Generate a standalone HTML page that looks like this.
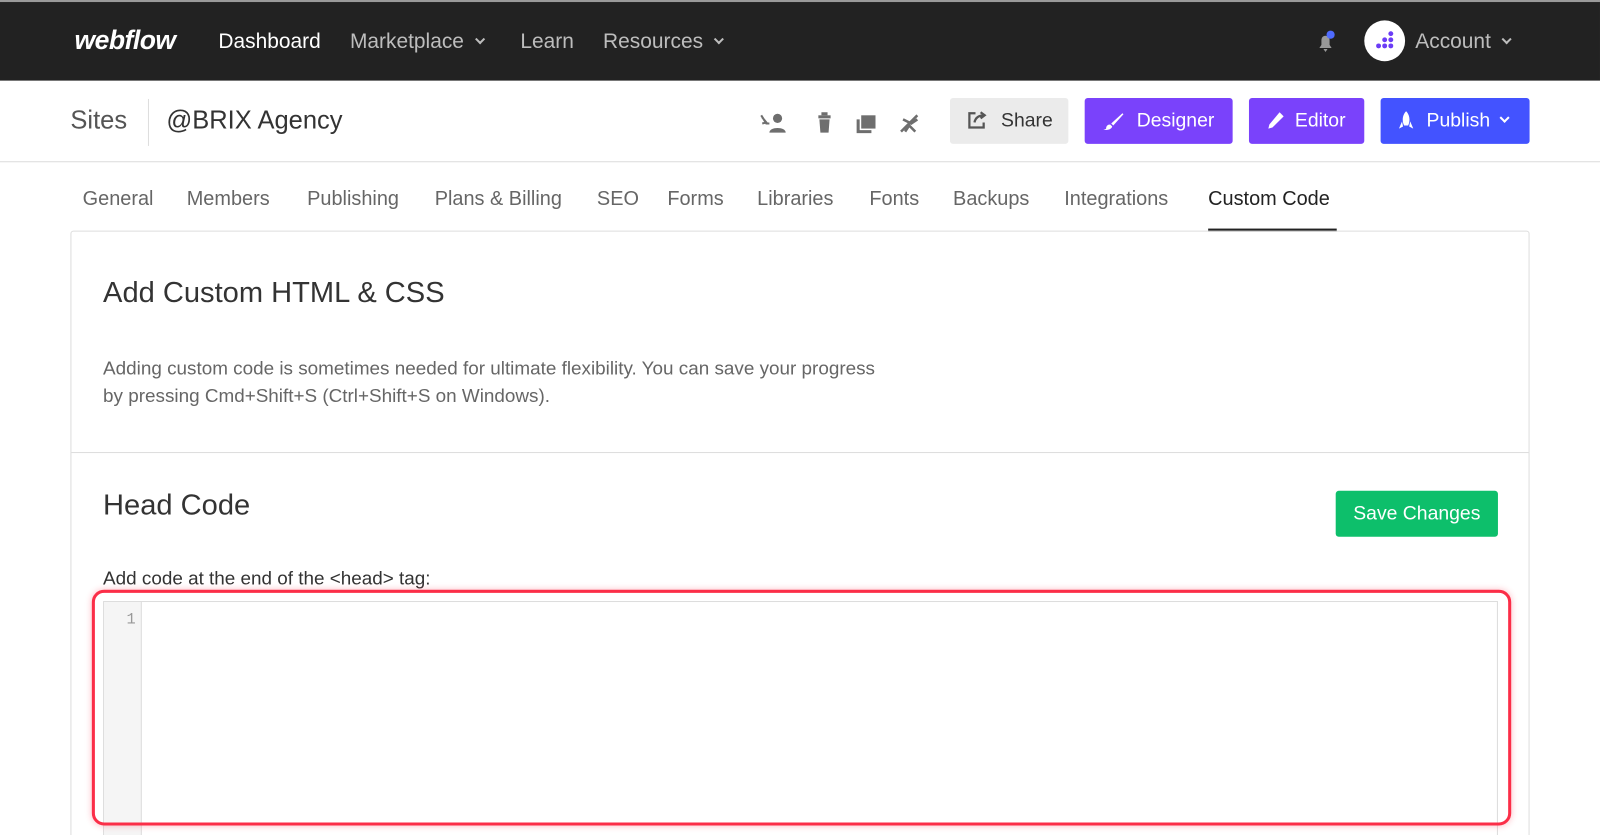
<!DOCTYPE html>
<html><head><meta charset="utf-8"><style>
*{box-sizing:border-box;margin:0;padding:0}
html,body{width:1600px;height:835px;overflow:hidden;background:#fff}
body{font-family:"Liberation Sans",sans-serif;color:#333;position:relative}
#w{position:absolute;left:0;top:0;width:1568px;height:820px;transform:scale(1.0204);transform-origin:0 0}
.top{position:absolute;left:0;top:0;width:1568px;height:79px;background:#222;border-top:2px solid #9a9a9a}
.top span{position:absolute;top:27px;font-size:20.5px;color:#bdbdbd}
.chev{display:inline-block;width:7px;height:7px;border-right:2px solid currentColor;border-bottom:2px solid currentColor;transform:rotate(45deg);margin-left:12px;position:relative;top:-5px}
.sub{position:absolute;top:79px;left:0;width:1568px;height:80px;border-bottom:1px solid #ddd}
.btn{position:absolute;top:17px;height:45px;border-radius:3px;font-size:19px;color:#fff;line-height:45px}
.tabs span{position:absolute;top:184px;font-size:19.5px;color:#666}
.card{position:absolute;left:69px;top:226px;width:1430px;height:620px;border:1px solid #ddd;border-radius:3px}
</style></head><body><div id="w">
<div class="top">
<span style="left:73px;top:22px;font-size:26px;font-weight:bold;font-style:italic;color:#fff;letter-spacing:-0.5px">webflow</span>
<span style="left:214px;color:#fff">Dashboard</span>
<span style="left:343px">Marketplace<i class="chev"></i></span>
<span style="left:510px">Learn</span>
<span style="left:591px">Resources<i class="chev"></i></span>
<svg style="position:absolute;left:1288px;top:27px" width="24" height="24" viewBox="0 0 24 24"><path d="M5 18h12l-2-3V10a4 4 0 0 0-8 0v5z M9 19h4l-2 3z" fill="#999"/><circle cx="16" cy="5" r="4" fill="#4f6bff"/></svg>
<div style="position:absolute;left:1337px;top:18px;width:40px;height:40px;border-radius:50%;background:#fff"><svg width="40" height="40"><g fill="#6b3cf6"><circle cx="26" cy="13" r="2.4"/><circle cx="20" cy="19" r="2.4"/><circle cx="26" cy="19" r="2.4"/><circle cx="14" cy="25" r="2.4"/><circle cx="20" cy="25" r="2.4"/><circle cx="26" cy="25" r="2.4"/></g></svg></div>
<span style="left:1387px">Account<i class="chev"></i></span>
</div>
<div class="sub">
<span style="position:absolute;left:69px;top:25px;font-size:25px;color:#555">Sites</span>
<div style="position:absolute;left:145px;top:18px;width:1px;height:46px;background:#ddd"></div>
<span style="position:absolute;left:163px;top:25px;font-size:25px;color:#333">@BRIX Agency</span>
<svg style="position:absolute;left:745px;top:30px" width="165" height="24" viewBox="0 0 165 24" fill="#6e6e6e"><path d="M2 6l4 5-4 1M1 4l5 8h3" stroke="#6e6e6e" stroke-width="2" fill="none"/><circle cx="17" cy="7" r="4.5"/><path d="M9 21c0-6 16-6 16 0z"/><rect x="57" y="4" width="12" height="3"/><rect x="60" y="1" width="6" height="3"/><path d="M58 8h10l-1 13h-8z"/><rect x="99" y="4" width="14" height="13"/><path d="M96 8v12h13" stroke="#6e6e6e" stroke-width="3" fill="none"/><path d="M138 20l16-16M140 8l8 4 6-4M142 20l4-6 6 6" stroke="#6e6e6e" stroke-width="2.5" fill="none"/></svg>
<div class="btn" style="left:931px;width:116px;background:#ebebeb;color:#333"><svg style="position:absolute;left:17px;top:13px" width="20" height="18" viewBox="0 0 20 18" fill="none" stroke="#555" stroke-width="2.2"><path d="M8 2H2v14h14v-5M7 11c1-5 5-7 10-7M13 1l4 3-4 3"/></svg><span style="position:absolute;left:50px">Share</span></div>
<div class="btn" style="left:1063px;width:145px;background:#7a42fb"><svg style="position:absolute;left:17px;top:14px" width="22" height="18" viewBox="0 0 22 18" fill="#fff"><path d="M20 1L9 11l2 2L21 2zM8 12c-3 0-4 2-4 4-1 1-3 1-3 1 4 1 8 0 9-3z"/></svg><span style="position:absolute;left:51px">Designer</span></div>
<div class="btn" style="left:1224px;width:113px;background:#7a42fb"><svg style="position:absolute;left:17px;top:13px" width="18" height="18" viewBox="0 0 18 18" fill="#fff"><path d="M13 1l4 4L6 16l-4 1 1-4z"/></svg><span style="position:absolute;left:45px">Editor</span></div>
<div class="btn" style="left:1353px;width:146px;background:#4353ff"><svg style="position:absolute;left:16px;top:12px" width="18" height="20" viewBox="0 0 18 20" fill="#fff"><path d="M9 1c4 4 4 10 2 14H7C5 11 5 5 9 1zM5 11l-3 7 4-2zM13 11l3 7-4-2z"/></svg><span style="position:absolute;left:45px">Publish<i class="chev" style="margin-left:11px"></i></span></div>
</div>
<div class="tabs">
<span style="left:81px">General</span><span style="left:183px">Members</span><span style="left:301px">Publishing</span><span style="left:426px">Plans &amp; Billing</span><span style="left:585px">SEO</span><span style="left:654px">Forms</span><span style="left:742px">Libraries</span><span style="left:852px">Fonts</span><span style="left:934px">Backups</span><span style="left:1043px">Integrations</span><span style="left:1184px;color:#222">Custom Code</span>
<div style="position:absolute;left:1184px;top:224px;width:126px;height:3px;background:#222"></div>
</div>
<div class="card">
<div style="position:absolute;left:31px;top:44px;font-size:28.5px;color:#333">Add Custom HTML &amp; CSS</div>
<div style="position:absolute;left:31px;top:120px;font-size:18.5px;line-height:27px;color:#666;width:760px">Adding custom code is sometimes needed for ultimate flexibility. You can save your progress by pressing Cmd+Shift+S (Ctrl+Shift+S on Windows).</div>
<div style="position:absolute;left:0;top:216px;width:1428px;height:1px;background:#ddd"></div>
<div style="position:absolute;left:31px;top:252px;font-size:28.5px;color:#333">Head Code</div>
<div style="position:absolute;left:1239px;top:254px;width:159px;height:45px;background:#0dbf6b;border-radius:3px;color:#fff;font-size:19px;line-height:45px;text-align:center">Save Changes</div>
<div style="position:absolute;left:31px;top:329px;font-size:18.5px;color:#333">Add code at the end of the &lt;head&gt; tag:</div>
<div style="position:absolute;left:31px;top:362px;width:1367px;height:260px;border:1px solid #ddd">
<div style="position:absolute;left:0;top:0;width:37px;height:260px;background:#f5f5f5;border-right:1px solid #ddd;font-family:'Liberation Mono',monospace;font-size:15px;color:#999;text-align:right;padding:9px 5px 0 0">1</div>
</div>
</div>
<div style="position:absolute;left:90px;top:578px;width:1391px;height:231px;border:3px solid #fb2e48;border-radius:12px;box-shadow:0 0 6px rgba(251,46,72,.3)"></div>
</div></body></html>
